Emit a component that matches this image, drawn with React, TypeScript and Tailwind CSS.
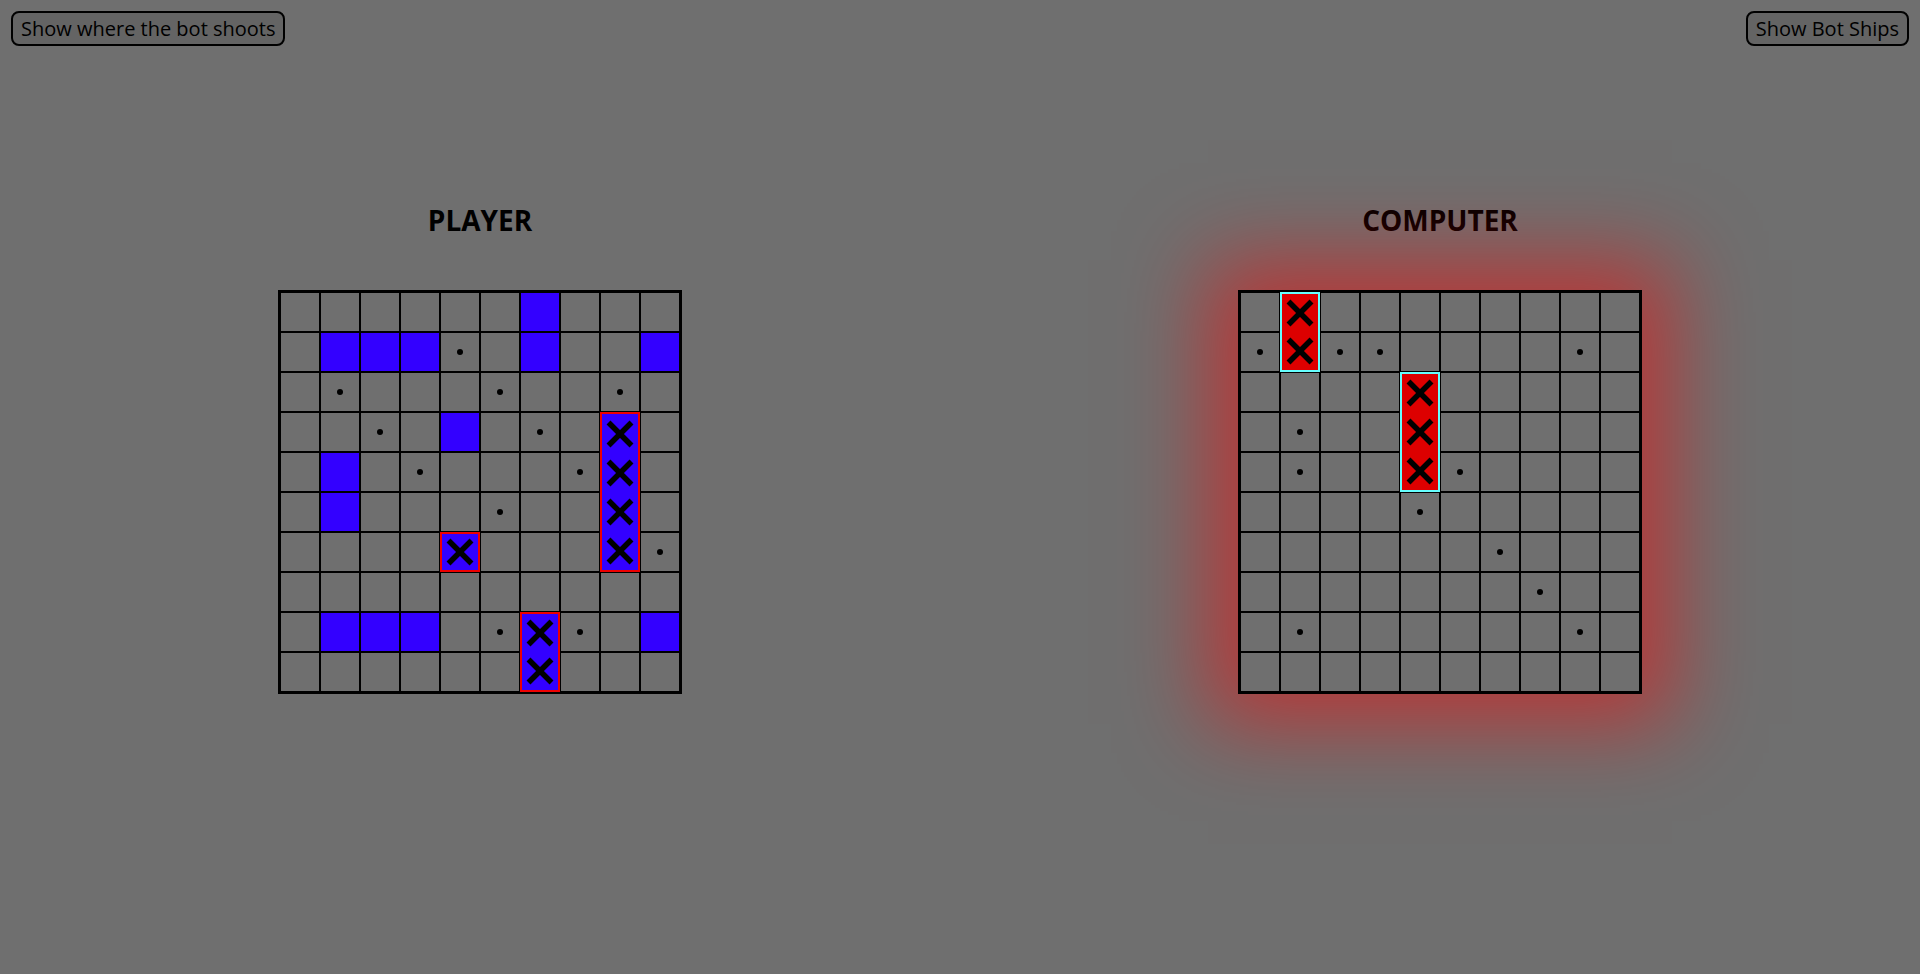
import React from "react";

type Ship = { r: number; c: number; len: number };

const COL = ["col-start-1","col-start-2","col-start-3","col-start-4","col-start-5","col-start-6","col-start-7","col-start-8","col-start-9","col-start-10"];
const ROW = ["row-start-1","row-start-2","row-start-3","row-start-4","row-start-5","row-start-6","row-start-7","row-start-8","row-start-9","row-start-10"];
const SPAN = ["row-span-1","row-span-1","row-span-2","row-span-3","row-span-4","row-span-5"];

const playerShips: Ship[] = [
  { r: 3, c: 8, len: 4 },
  { r: 6, c: 4, len: 1 },
  { r: 8, c: 6, len: 2 },
];
const playerBlue: [number, number][] = [
  [0, 6], [1, 1], [1, 2], [1, 3], [1, 6], [1, 9], [3, 4], [4, 1], [5, 1], [8, 1], [8, 2], [8, 3], [8, 9],
];
const playerDots: [number, number][] = [
  [1, 4], [2, 1], [2, 5], [2, 8], [3, 2], [3, 6], [4, 3], [4, 7], [5, 5], [6, 9], [8, 5], [8, 7],
];

const compShips: Ship[] = [
  { r: 0, c: 1, len: 2 },
  { r: 2, c: 4, len: 3 },
];
const compDots: [number, number][] = [
  [1, 0], [1, 2], [1, 3], [1, 8], [3, 1], [4, 1], [4, 5], [5, 4], [6, 6], [7, 7], [8, 1], [8, 8],
];

function XMark() {
  return (
    <svg width="28" height="28" viewBox="0 0 28 28" className="block">
      <line x1="2.5" y1="2.5" x2="25.5" y2="25.5" stroke="#000" strokeWidth="5.5" />
      <line x1="25.5" y1="2.5" x2="2.5" y2="25.5" stroke="#000" strokeWidth="5.5" />
    </svg>
  );
}

function Board({
  ships,
  blue,
  dots,
  shipClass,
  glow,
}: {
  ships: Ship[];
  blue: [number, number][];
  dots: [number, number][];
  shipClass: string;
  glow?: boolean;
}) {
  const covered = new Set<string>();
  ships.forEach((s) => {
    for (let i = 0; i < s.len; i++) covered.add(`${s.r + i}-${s.c}`);
  });
  const blueSet = new Set(blue.map(([r, c]) => `${r}-${c}`));
  const dotSet = new Set(dots.map(([r, c]) => `${r}-${c}`));
  const cells: React.ReactNode[] = [];
  for (let r = 0; r < 10; r++) {
    for (let c = 0; c < 10; c++) {
      const k = `${r}-${c}`;
      if (covered.has(k)) continue;
      cells.push(
        <div
          key={k}
          className={`${ROW[r]} ${COL[c]} border border-black flex items-center justify-center ${
            blueSet.has(k) ? "bg-[#3300ff]" : "bg-[#6f6f6f]"
          }`}
        >
          {dotSet.has(k) && <div className="w-[6px] h-[6px] rounded-full bg-black" />}
        </div>
      );
    }
  }
  return (
    <div
      className={`grid grid-cols-[repeat(10,40px)] grid-rows-[repeat(10,40px)] border-2 border-black ${
        glow ? "shadow-[0_0_80px_30px_rgba(255,0,0,0.5)]" : ""
      }`}
    >
      {ships.map((s, i) => (
        <div
          key={`s${i}`}
          className={`${ROW[s.r]} ${COL[s.c]} ${SPAN[s.len]} border-2 flex flex-col ${shipClass}`}
        >
          {Array.from({ length: s.len }).map((_, j) => (
            <div key={j} className="flex-1 flex items-center justify-center">
              <XMark />
            </div>
          ))}
        </div>
      ))}
      {cells}
    </div>
  );
}

export default function App() {
  return (
    <div
      className="w-full min-h-[974px] bg-[#6f6f6f] text-black"
      style={{ fontFamily: "'Open Sans', 'DejaVu Sans', sans-serif" }}
    >
      <div className="flex justify-between px-[11px] pt-[11px]">
        <button className="h-[35px] px-2 border-2 border-black rounded-lg bg-[#646464] text-[20px] leading-none text-black">
          Show where the bot shoots
        </button>
        <button className="h-[35px] px-2 border-2 border-black rounded-lg bg-[#646464] text-[20px] leading-none text-black">
          Show Bot Ships
        </button>
      </div>
      <div className="grid grid-cols-2 mt-[155px]">
        <div className="flex flex-col items-center">
          <h2 className="text-[28px] font-bold leading-[38px]">PLAYER</h2>
          <div className="mt-[51px]">
            <Board
              ships={playerShips}
              blue={playerBlue}
              dots={playerDots}
              shipClass="border-[#ee0000] bg-[#3300ff]"
            />
          </div>
        </div>
        <div className="flex flex-col items-center">
          <h2 className="text-[28px] font-bold leading-[38px]">COMPUTER</h2>
          <div className="mt-[51px]">
            <Board
              ships={compShips}
              blue={[]}
              dots={compDots}
              shipClass="border-[#66ffff] bg-[#dd0000]"
              glow
            />
          </div>
        </div>
      </div>
    </div>
  );
}
